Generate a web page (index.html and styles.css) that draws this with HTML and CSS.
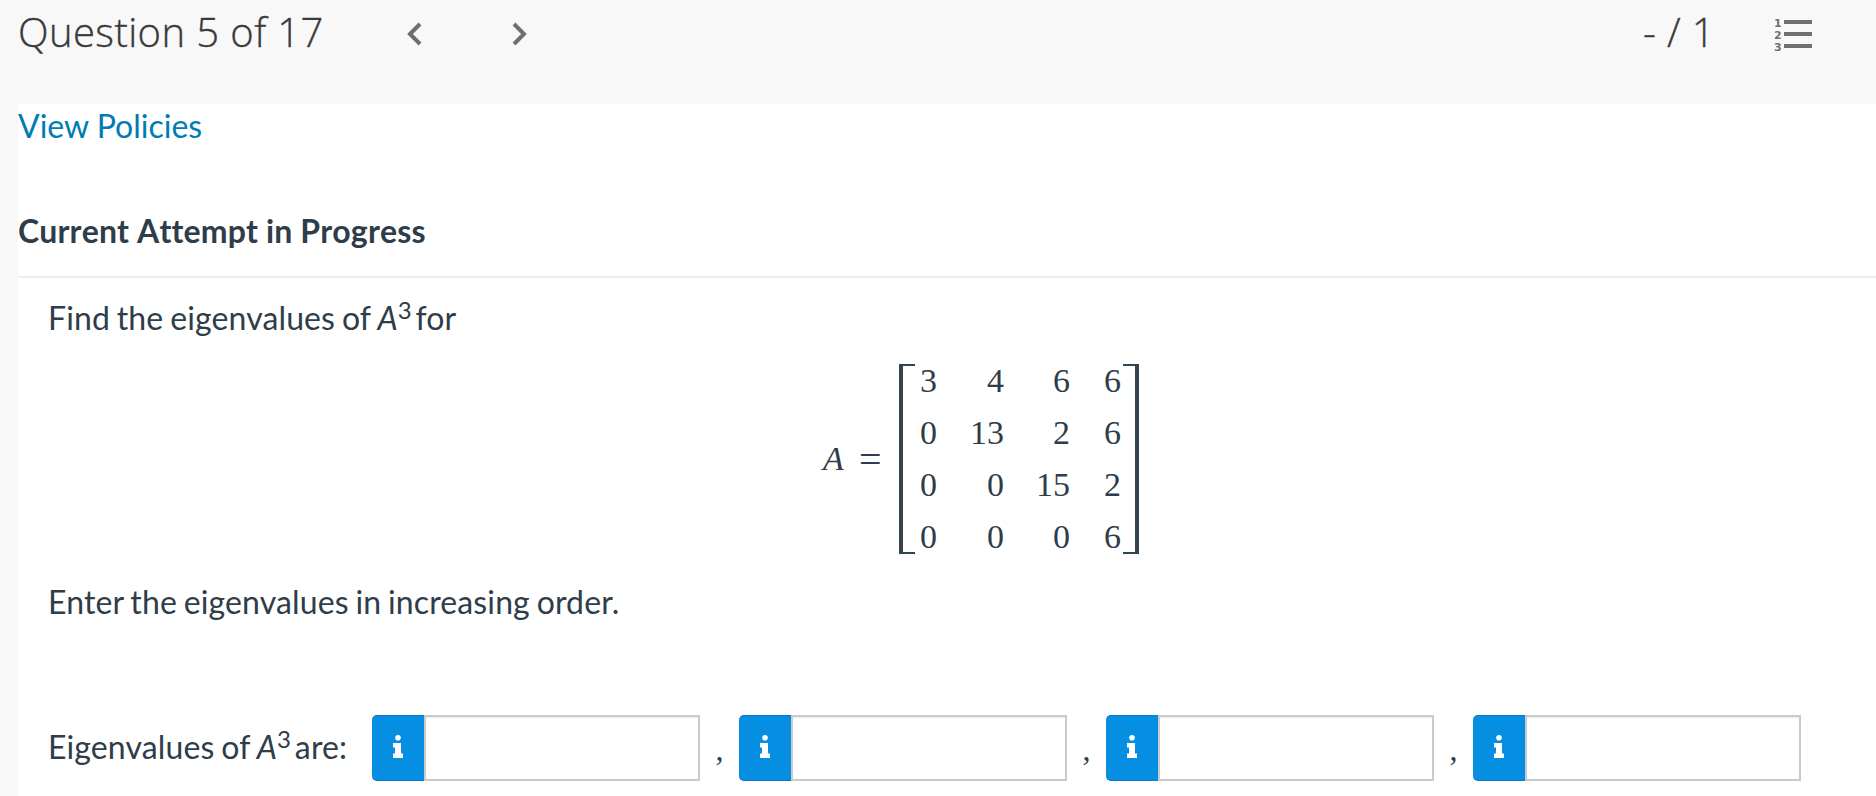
FILE: index.html
```html
<!DOCTYPE html>
<html lang="en">
<head>
<meta charset="utf-8">
<title>Question 5 of 17</title>
<link rel="stylesheet" href="styles.css">
</head>
<body>
<header class="topbar">
  <h1 class="q-title">Question 5 of 17</h1>
  <nav class="q-nav">
    <svg class="chev" viewBox="0 0 16 24"><path d="M14 2 L4 12 L14 22"/></svg>
    <svg class="chev" viewBox="0 0 16 24"><path d="M2 2 L12 12 L2 22"/></svg>
  </nav>
  <div class="score">- / 1</div>
  <svg class="list-icon" viewBox="0 0 40 30">
    <text class="list-num" x="2" y="7">1</text>
    <text class="list-num" x="2" y="19">2</text>
    <text class="list-num" x="2" y="31">3</text>
    <rect x="12" y="0" width="28" height="4"/>
    <rect x="12" y="12" width="28" height="4"/>
    <rect x="12" y="24" width="28" height="4"/>
  </svg>
</header>
<main class="content">
  <a class="policies" href="#">View Policies</a>
  <h2 class="attempt">Current Attempt in Progress</h2>
  <section class="question">
    <p class="find">Find the eigenvalues of <i>A</i><sup>3</sup> for</p>
    <div class="equation">
      <span class="eq-lhs"><i>A</i></span>
      <span class="eq-sign">=</span>
      <div class="matrix">
        <span>3</span><span>4</span><span>6</span><span>6</span>
        <span>0</span><span>13</span><span>2</span><span>6</span>
        <span>0</span><span>0</span><span>15</span><span>2</span>
        <span>0</span><span>0</span><span>0</span><span>6</span>
      </div>
    </div>
    <p class="enter">Enter the eigenvalues in increasing order.</p>
    <div class="answers">
      <span class="ans-label">Eigenvalues of <i>A</i><sup>3</sup> are:</span>
      <div class="field"><span class="info"><svg class="info-i" viewBox="0 0 10 23"><circle cx="5" cy="2.8" r="2.8"/><path d="M0 8 H8 V18.5 H10 V23 H0 V18.5 H2 V12.5 H0 Z"/></svg></span><span class="box"></span></div>
      <span class="comma">,</span>
      <div class="field"><span class="info"><svg class="info-i" viewBox="0 0 10 23"><circle cx="5" cy="2.8" r="2.8"/><path d="M0 8 H8 V18.5 H10 V23 H0 V18.5 H2 V12.5 H0 Z"/></svg></span><span class="box"></span></div>
      <span class="comma">,</span>
      <div class="field"><span class="info"><svg class="info-i" viewBox="0 0 10 23"><circle cx="5" cy="2.8" r="2.8"/><path d="M0 8 H8 V18.5 H10 V23 H0 V18.5 H2 V12.5 H0 Z"/></svg></span><span class="box"></span></div>
      <span class="comma">,</span>
      <div class="field"><span class="info"><svg class="info-i" viewBox="0 0 10 23"><circle cx="5" cy="2.8" r="2.8"/><path d="M0 8 H8 V18.5 H10 V23 H0 V18.5 H2 V12.5 H0 Z"/></svg></span><span class="box"></span></div>
    </div>
  </section>
</main>
</body>
</html>
```
FILE: styles.css
```css
* { box-sizing: border-box; }
html, body { margin: 0; height: 100%; }
body {
  background: #f8f8f8;
  font-family: Lato, "Liberation Sans", sans-serif;
  color: #2e3d49;
  overflow: hidden;
}
.topbar {
  height: 104px;
  display: flex;
  align-items: flex-start;
  padding: 9px 64px 0 18px;
}
.q-title, .score {
  margin: 0;
  font-family: "Open Sans", sans-serif;
  font-weight: 300;
  font-size: 40px;
  line-height: 46px;
  letter-spacing: 0.4px;
  color: #3a3a3a;
  -webkit-text-stroke: 0.35px #3a3a3a;
}
.q-nav {
  display: flex;
  gap: 90px;
  margin: 13px 0 0 82px;
}
.chev { width: 16px; height: 24px; display: block; }
.chev path { fill: none; stroke: #6f6f6f; stroke-width: 4; }
.score { margin-left: auto; }
.list-icon { width: 40px; height: 30px; margin: 11px 0 0 57px; overflow: visible; }
.list-icon rect { fill: #707070; }
.list-num { font-family: "DejaVu Sans", sans-serif; font-size: 11px; font-weight: 700; fill: #707070; }
.content {
  margin-left: 18px;
  background: #fff;
  height: 692px;
}
.policies {
  display: block;
  padding-top: 3px;
  font-size: 32px;
  line-height: 38px;
  color: #007cb3;
  text-decoration: none;
}
.attempt {
  margin: 0;
  padding: 67px 0 24px;
  height: 133px;
  font-size: 32px;
  line-height: 38px;
  font-weight: 700;
  font-kerning: none;
  letter-spacing: 0.14px;
  border-bottom: 2px solid #eeeeee;
}
.question { padding: 0 0 0 30px; }
.find, .enter { margin: 0; font-size: 32px; line-height: 38px; word-spacing: -1.5px; letter-spacing: 0.12px; }
.find { padding-top: 21px; }
sup { font-size: 24px; line-height: 0; vertical-align: 11px; margin-right: -3px; }
.equation {
  display: flex;
  align-items: center;
  margin: 27px 0 0 775px;
  font-family: "Liberation Serif", serif;
  font-size: 34px;
  height: 190px;
}
.eq-lhs { width: 36px; }
.eq-sign { width: 40px; font-size: 40px; }
.matrix {
  position: relative;
  display: grid;
  grid-template-columns: 38px 67px 66px 51px;
  grid-auto-rows: 52px;
  height: 190px;
  width: 240px;
  align-content: center;
  justify-items: end;
  line-height: 52px;
}
.matrix::before, .matrix::after {
  content: "";
  position: absolute;
  top: 0;
  bottom: 0;
  width: 12px;
  border: 4px solid #33454f;
  border-width: 2px 4px;
}
.matrix::before { left: 0; border-right: 0; }
.matrix::after { right: 0; border-left: 0; }
.enter { padding-top: 29px; }
.answers {
  display: flex;
  align-items: center;
  margin-top: 94px;
  font-size: 32px;
}
.ans-label { width: 324px; padding-bottom: 3px; word-spacing: -1.5px; letter-spacing: 0.12px; }
.field { display: flex; width: 328px; height: 66px; }
.info {
  width: 52px;
  display: flex;
  align-items: center;
  justify-content: center;
  background: #058ee2;
  border: 1px solid #0a7cc6;
  border-width: 1px 0;
  border-radius: 5px 0 0 5px;
}
.info-i { width: 10px; height: 23px; margin-top: -4px; fill: #fff; }
.box { flex: 1; background: #fff; border: 2px solid #cacaca; box-shadow: inset 0 1px 1px rgba(0,0,0,.08); }
.comma { width: 39px; text-align: center; font-family: "Liberation Serif", serif; padding-top: 2px; }
```
